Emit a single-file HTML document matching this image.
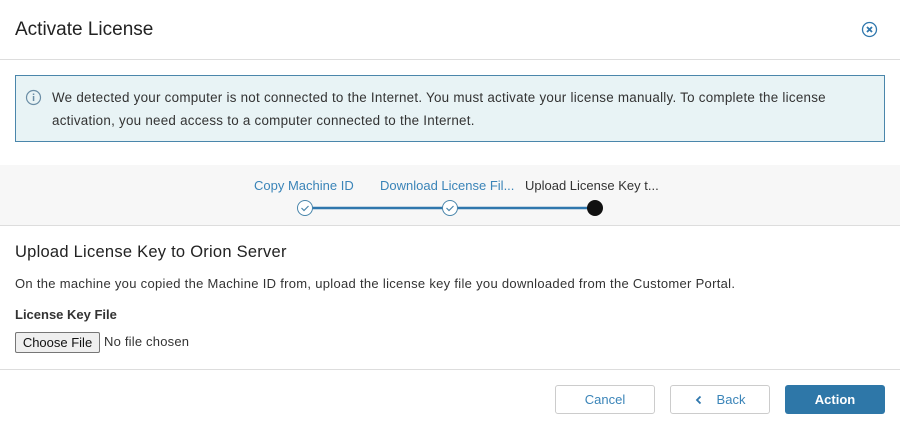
<!DOCTYPE html>
<html><head><style>
*{box-sizing:border-box;margin:0;padding:0}
body{width:900px;height:427px;background:#fff;font-family:"Liberation Sans",sans-serif;color:#333;position:relative;overflow:hidden}
.abs{position:absolute}
.btn{position:absolute;top:385px;height:29px;border-radius:3px;font-size:13px;display:flex;align-items:center;justify-content:center}
</style></head><body>
<div class="abs" style="left:15px;top:19px;font-size:19px;color:#222">Activate License</div>
<svg class="abs" style="left:861px;top:21px" width="17" height="17" viewBox="0 0 17 17"><circle cx="8.5" cy="8.5" r="7" fill="none" stroke="#2f77ad" stroke-width="1.3"/><path d="M6 6L11 11M11 6L6 11" stroke="#2f77ad" stroke-width="1.8"/></svg>
<div class="abs" style="left:0;top:59px;width:900px;height:1px;background:#ddd"></div>
<div class="abs" style="left:15px;top:75px;width:870px;height:67px;background:#e8f3f5;border:1px solid #4a86ab"></div>
<svg class="abs" style="left:25px;top:89px" width="17" height="17" viewBox="0 0 17 17"><circle cx="8.5" cy="8.5" r="7" fill="none" stroke="#6b8ea6" stroke-width="1.2"/><rect x="7.8" y="7" width="1.5" height="5" fill="#6b8ea6"/><rect x="7.8" y="4.5" width="1.5" height="1.5" fill="#6b8ea6"/></svg>
<div class="abs" style="left:52px;top:86px;width:800px;font-size:13.4px;line-height:23px;color:#333;letter-spacing:0.25px">We detected your computer is not connected to the Internet. You must activate your license manually. To complete the license activation, you need access to a computer connected to the Internet.</div>
<div class="abs" style="left:0;top:165px;width:900px;height:61px;background:#f7f7f7;border-bottom:1px solid #ddd"></div>
<div class="abs" style="left:254px;top:178px;font-size:13px;color:#3a84b8">Copy Machine ID</div>
<div class="abs" style="left:380px;top:178px;font-size:13px;color:#3a84b8">Download License Fil...</div>
<div class="abs" style="left:525px;top:178px;font-size:13px;color:#333">Upload License Key t...</div>
<svg class="abs" style="left:290px;top:198px" width="320" height="22"><line x1="15" y1="10" x2="305" y2="10" stroke="#2f77ad" stroke-width="2.5"/><circle cx="15" cy="10" r="7.5" fill="#fff" stroke="#4a86ab" stroke-width="1"/><path d="M11.5 10L14 12.5L18.5 8" fill="none" stroke="#4a86ab" stroke-width="1.2"/><circle cx="160" cy="10" r="7.5" fill="#fff" stroke="#4a86ab" stroke-width="1"/><path d="M156.5 10L159 12.5L163.5 8" fill="none" stroke="#4a86ab" stroke-width="1.2"/><circle cx="305" cy="10" r="8" fill="#111"/></svg>
<div class="abs" style="left:15px;top:243px;font-size:16.5px;color:#222;letter-spacing:0.25px">Upload License Key to Orion Server</div>
<div class="abs" style="left:15px;top:276px;font-size:13px;color:#333;letter-spacing:0.3px">On the machine you copied the Machine ID from, upload the license key file you downloaded from the Customer Portal.</div>
<div class="abs" style="left:15px;top:307px;font-size:13px;color:#333;font-weight:bold">License Key File</div>
<div class="abs" style="left:15px;top:332px;width:85px;height:21px;border:1px solid #767676;border-radius:2px;background:#efefef;font-size:13px;color:#111;text-align:center;line-height:19px">Choose File</div>
<div class="abs" style="left:104px;top:334px;font-size:13px;color:#333;letter-spacing:0.2px">No file chosen</div>
<div class="abs" style="left:0;top:369px;width:900px;height:1px;background:#ddd"></div>
<div class="btn" style="left:555px;width:100px;border:1px solid #ccc;color:#3a84b8">Cancel</div>
<div class="btn" style="left:670px;width:100px;border:1px solid #ccc;color:#3a84b8"><svg width="8" height="10" style="margin-right:14px"><path d="M5.5 1.5L2 5L5.5 8.5" fill="none" stroke="#2f77ad" stroke-width="1.8"/></svg>Back</div>
<div class="btn" style="left:785px;width:100px;background:#2e77a8;color:#fff;font-weight:bold">Action</div>
</body></html>
